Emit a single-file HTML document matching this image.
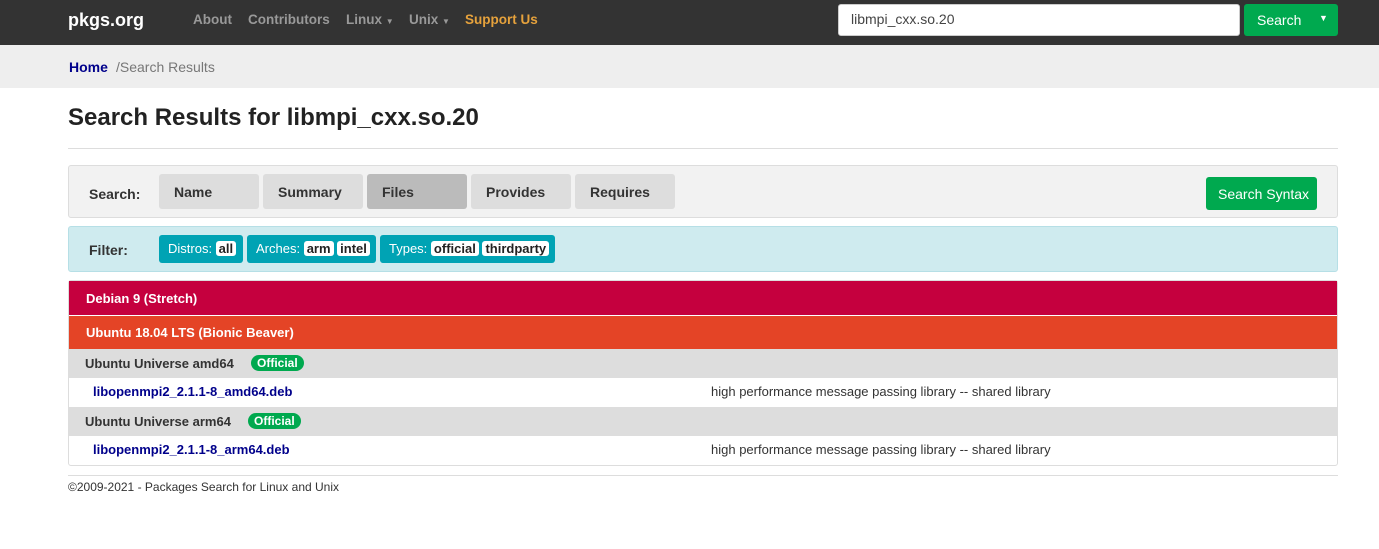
<!DOCTYPE html>
<html><head><meta charset="utf-8"><style>
*{box-sizing:border-box;margin:0;padding:0}
body{width:1379px;height:549px;background:#fff;font-family:"Liberation Sans",sans-serif;position:relative;overflow:hidden;color:#222}
.a{position:absolute;white-space:nowrap}
.nav{position:absolute;left:0;top:0;width:1379px;height:45px;background:#333}
.b{font-weight:bold}
</style></head><body>
<div class="nav"></div>
<div class="a b" style="left:68px;top:10px;font-size:18px;color:#fff">pkgs.org</div>
<div class="a b" style="left:193px;top:12px;font-size:13.5px;color:#999">About</div>
<div class="a b" style="left:248px;top:12px;font-size:13.5px;color:#999">Contributors</div>
<div class="a b" style="left:346px;top:12px;font-size:13.5px;color:#999">Linux <span style="font-size:8px">▼</span></div>
<div class="a b" style="left:409px;top:12px;font-size:13.5px;color:#999">Unix <span style="font-size:8px">▼</span></div>
<div class="a b" style="left:465px;top:12px;font-size:13.5px;color:#e6a23c">Support Us</div>
<div class="a" style="left:838px;top:4px;width:402px;height:32px;background:#fff;border:1px solid #ccc;border-radius:3px"></div>
<div class="a" style="left:851px;top:11px;font-size:14px;color:#444">libmpi_cxx.so.20</div>
<div class="a" style="left:1244px;top:4px;width:94px;height:32px;background:#00a94f;border-radius:3px"></div>
<div class="a" style="left:1257px;top:12px;font-size:14px;color:#fff">Search</div>
<div class="a" style="left:1319px;top:13px;font-size:9px;color:#fff">▼</div>
<div class="a" style="left:0;top:45px;width:1379px;height:43px;background:#eee"></div>
<div class="a b" style="left:69px;top:59px;font-size:14px;color:#00008b">Home</div>
<div class="a" style="left:116px;top:59px;font-size:14px;color:#777">/Search Results</div>
<div class="a b" style="left:68px;top:104px;font-size:24px;color:#222">Search Results for libmpi_cxx.so.20</div>
<div class="a" style="left:68px;top:148px;width:1270px;height:1px;background:#ddd"></div>
<div class="a" style="left:68px;top:165px;width:1270px;height:53px;background:#f2f2f2;border:1px solid #ddd;border-radius:3px"></div>
<div class="a b" style="left:89px;top:186px;font-size:14px;color:#333">Search:</div>
<div class="a" style="left:159px;top:174px;width:100px;height:35px;background:#ddd;border-radius:3px"></div>
<div class="a" style="left:263px;top:174px;width:100px;height:35px;background:#ddd;border-radius:3px"></div>
<div class="a" style="left:367px;top:174px;width:100px;height:35px;background:#bbb;border-radius:3px"></div>
<div class="a" style="left:471px;top:174px;width:100px;height:35px;background:#ddd;border-radius:3px"></div>
<div class="a" style="left:575px;top:174px;width:100px;height:35px;background:#ddd;border-radius:3px"></div>
<div class="a b" style="left:174px;top:184px;font-size:14px;color:#333">Name</div>
<div class="a b" style="left:278px;top:184px;font-size:14px;color:#333">Summary</div>
<div class="a b" style="left:382px;top:184px;font-size:14px;color:#333">Files</div>
<div class="a b" style="left:486px;top:184px;font-size:14px;color:#333">Provides</div>
<div class="a b" style="left:590px;top:184px;font-size:14px;color:#333">Requires</div>
<div class="a" style="left:1206px;top:177px;width:111px;height:33px;background:#00a94f;border-radius:3px"></div>
<div class="a" style="left:1218px;top:186px;font-size:14px;color:#fff">Search Syntax</div>
<div class="a" style="left:68px;top:226px;width:1270px;height:46px;background:#cfebef;border:1px solid #b6dfe6;border-radius:3px"></div>
<div class="a b" style="left:89px;top:242px;font-size:14px;color:#333">Filter:</div>
<div class="a" style="left:159px;top:235px;width:84px;height:28px;background:#00a3b4;border-radius:3px"></div>
<div class="a" style="left:247px;top:235px;width:129px;height:28px;background:#00a3b4;border-radius:3px"></div>
<div class="a" style="left:380px;top:235px;width:175px;height:28px;background:#00a3b4;border-radius:3px"></div>
<div class="a" style="left:168px;top:241px;font-size:13px;color:#fff">Distros: <b style="background:#fff;color:#222;border-radius:3px;padding:0 3px">all</b></div>
<div class="a" style="left:256px;top:241px;font-size:13px;color:#fff">Arches: <b style="background:#fff;color:#222;border-radius:3px;padding:0 3px">arm</b> <b style="background:#fff;color:#222;border-radius:3px;padding:0 3px">intel</b></div>
<div class="a" style="left:389px;top:241px;font-size:13px;color:#fff">Types: <b style="background:#fff;color:#222;border-radius:3px;padding:0 3px">official</b> <b style="background:#fff;color:#222;border-radius:3px;padding:0 3px">thirdparty</b></div>
<div class="a" style="left:68px;top:280px;width:1270px;height:186px;border:1px solid #ddd;border-radius:3px"></div>
<div class="a" style="left:69px;top:281px;width:1268px;height:34px;background:#c5003e"></div>
<div class="a b" style="left:86px;top:291px;font-size:13px;color:#fff">Debian 9 (Stretch)</div>
<div class="a" style="left:69px;top:316px;width:1268px;height:33px;background:#e44426"></div>
<div class="a b" style="left:86px;top:325px;font-size:13px;color:#fff">Ubuntu 18.04 LTS (Bionic Beaver)</div>
<div class="a" style="left:69px;top:349px;width:1268px;height:29px;background:#ddd"></div>
<div class="a b" style="left:85px;top:356px;font-size:13px;color:#333">Ubuntu Universe amd64</div>
<div class="a b" style="left:251px;top:355px;font-size:12px;color:#fff;background:#00a94f;border-radius:9px;padding:1px 6px">Official</div>
<div class="a b" style="left:93px;top:384px;font-size:13px;color:#00008b">libopenmpi2_2.1.1-8_amd64.deb</div>
<div class="a" style="left:711px;top:384px;font-size:13px;color:#333">high performance message passing library -- shared library</div>
<div class="a" style="left:69px;top:407px;width:1268px;height:29px;background:#ddd"></div>
<div class="a b" style="left:85px;top:414px;font-size:13px;color:#333">Ubuntu Universe arm64</div>
<div class="a b" style="left:248px;top:413px;font-size:12px;color:#fff;background:#00a94f;border-radius:9px;padding:1px 6px">Official</div>
<div class="a b" style="left:93px;top:442px;font-size:13px;color:#00008b">libopenmpi2_2.1.1-8_arm64.deb</div>
<div class="a" style="left:711px;top:442px;font-size:13px;color:#333">high performance message passing library -- shared library</div>
<div class="a" style="left:68px;top:475px;width:1270px;height:1px;background:#ddd"></div>
<div class="a" style="left:68px;top:480px;font-size:12px;color:#333">©2009-2021 - Packages Search for Linux and Unix</div>
</body></html>
